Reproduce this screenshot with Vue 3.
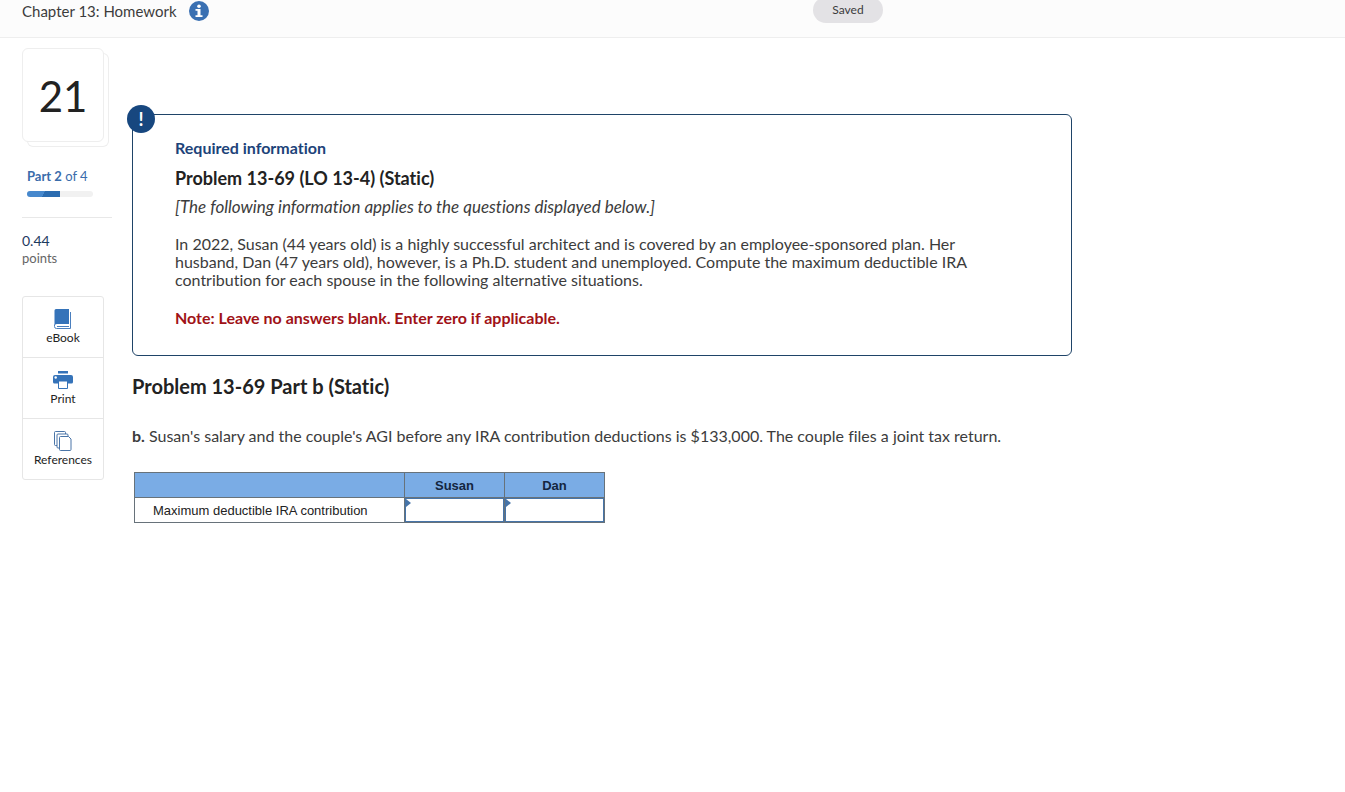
<script setup>
import { ref } from 'vue'

const part = ref(2)
const parts = ref(4)
const tools = [
  { id: 'ebook', label: 'eBook' },
  { id: 'print', label: 'Print' },
  { id: 'references', label: 'References' },
]
const answers = ref([
  { id: 'susan', name: 'Susan', value: '' },
  { id: 'dan', name: 'Dan', value: '' },
])
</script>

<template>
  <div class="homework">
    <header class="top-bar">
      <div class="title">
        <span>Chapter 13: Homework</span>
        <button class="info-btn" type="button" aria-label="Assignment info">
          <svg width="20" height="20" viewBox="0 0 20 20">
            <circle cx="10" cy="10" r="10" fill="#3a70b2" />
            <circle cx="10" cy="5.2" r="1.8" fill="#fff" />
            <path d="M6.500 8h5v6.200h2V16h-7v-1.800h2V9.800h-2z" fill="#fff" />
          </svg>
        </button>
      </div>
      <span class="saved">Saved</span>
    </header>

    <div class="content">
      <aside class="sidebar">
        <div class="question-no">21</div>
        <div class="part">
          <span><b>Part {{ part }}</b> of {{ parts }}</span>
          <div class="progress">
            <div class="progress-fill" :style="{ width: (part / parts) * 100 + '%' }"></div>
          </div>
        </div>
        <div class="points">
          <span class="points-value">0.44</span>
          <span class="points-label">points</span>
        </div>
        <nav class="tools">
          <button v-for="t in tools" :key="t.id" class="tool" type="button">
            <svg v-if="t.id === 'ebook'" width="20" height="22" viewBox="0 0 20 22">
              <path d="M3 1h13v15H4a2.500 2.500 0 0 0-2.500 1.500V2.500A1.500 1.500 0 0 1 3 1z" fill="#3573b9" />
              <path d="M17.500 4v16.500h-14a2 2 0 0 1-2-2v-2M4 18.500h12" fill="none" stroke="#4a7fbe" />
            </svg>
            <svg v-else-if="t.id === 'print'" width="20" height="22" viewBox="0 0 20 22">
              <path d="M5 2h10v2.500H5zM2 6h16a2 2 0 0 1 2 2v5a1.500 1.500 0 0 1-1.500 1.500h-17A1.500 1.500 0 0 1 0 13V8a2 2 0 0 1 2-2z" fill="#3573b9" />
              <path d="M5.500 12h9v7.500h-9z" fill="#fff" stroke="#3573b9" />
              <circle cx="2.700" cy="8.500" r="1.200" fill="#fff" />
            </svg>
            <svg v-else width="20" height="22" viewBox="0 0 20 22">
              <g fill="#fff" stroke="#4a75a8">
                <rect x="1.500" y="1.500" width="11" height="14" rx="1" />
                <rect x="4" y="4" width="11" height="14" rx="1" />
                <path d="M7.500 6.500h8l2.500 2.500v10.500a1 1 0 0 1-1 1H7.500a1 1 0 0 1-1-1v-12a1 1 0 0 1 1-1z" />
              </g>
            </svg>
            <span>{{ t.label }}</span>
          </button>
        </nav>
      </aside>

      <main class="question">
        <section class="required">
          <span class="alert">!</span>
          <h2>Required information</h2>
          <h3>Problem 13-69 (LO 13-4) (Static)</h3>
          <p class="applies">[The following information applies to the questions displayed below.]</p>
          <p>
            In 2022, Susan (44 years old) is a highly successful architect and is covered by an
            employee-sponsored plan. Her husband, Dan (47 years old), however, is a Ph.D. student and
            unemployed. Compute the maximum deductible IRA contribution for each spouse in the
            following alternative situations.
          </p>
          <p class="note">Note: Leave no answers blank. Enter zero if applicable.</p>
        </section>

        <h1>Problem 13-69 Part b (Static)</h1>
        <p class="prompt">
          <b>b.</b> Susan's salary and the couple's AGI before any IRA contribution deductions is
          $133,000. The couple files a joint tax return.
        </p>

        <table class="answer-table">
          <thead>
            <tr>
              <td></td>
              <th v-for="a in answers" :id="a.id" :key="a.id" scope="col">{{ a.name }}</th>
            </tr>
          </thead>
          <tbody>
            <tr>
              <th id="max-ira" class="row-label" scope="row">Maximum deductible IRA contribution</th>
              <td v-for="a in answers" :key="a.id" class="answer-cell">
                <input v-model="a.value" type="text" :aria-labelledby="'max-ira ' + a.id" />
              </td>
            </tr>
          </tbody>
        </table>
      </main>
    </div>
  </div>
</template>

<style>
body { margin: 0; background: #fff; }
</style>

<style scoped>
.homework { font-family: Lato, "Liberation Sans", sans-serif; font-size: 16px; line-height: 18px; font-variant-ligatures: none; color: #3c3c3c; }
h1, h2, h3, p { margin: 0; }
button { font: inherit; color: inherit; background: none; border: none; padding: 0; cursor: pointer; }
svg { display: block; }

.top-bar { display: grid; grid-template-columns: 813px auto; justify-content: start; box-sizing: border-box; height: 41px; margin-top: -3px; background: #fcfcfc; border-bottom: 1px solid #eee; }
.title { display: flex; align-items: center; gap: 12px; height: 28px; padding-left: 22px; font-size: 15px; }
.saved { width: 70px; height: 26px; line-height: 26px; border-radius: 13px; background: #e3e2e5; font-size: 12px; text-align: center; }

.content { display: flex; gap: 20px; padding: 10px 22px; }
.sidebar { flex: 0 0 90px; }
.question-no { box-sizing: border-box; width: 82px; height: 94px; line-height: 94px; border: 1px solid #eee; border-radius: 6px; background: #fff; box-shadow: 5px 5px 0 -1px #fff, 5px 5px 0 0 #eee; font-size: 42px; color: #222; text-align: center; }
.part { padding: 25px 0 20px 5px; border-bottom: 1px solid #e8e8e8; font-size: 13px; color: #3a6cab; }
.progress { width: 66px; height: 6px; margin-top: 6px; border-radius: 3px; background: #f1f1f1; overflow: hidden; }
.progress-fill { height: 100%; background: linear-gradient(120deg, #4688cd 50%, #2b6cb0 50%); }
.points { display: flex; flex-direction: column; padding: 14px 0 30px; }
.points-value { font-size: 14px; color: #1d3a5f; }
.points-label { font-size: 13px; line-height: 16px; color: #666; }
.tools { box-sizing: border-box; width: 82px; border: 1px solid #e6e6e6; border-radius: 3px; }
.tool { display: flex; flex-direction: column; align-items: center; width: 100%; height: 60px; padding-top: 11px; box-sizing: border-box; font-size: 12px; line-height: 16px; color: #222; }
.tool + .tool { height: 61px; border-top: 1px solid #e6e6e6; }

.question { flex: 1; min-width: 0; padding-top: 66px; }
.required { position: relative; box-sizing: border-box; max-width: 940px; padding: 24px 60px 28px 42px; border: 1px solid #1f4468; border-radius: 6px; }
.alert { position: absolute; top: -10px; left: -6px; width: 28px; height: 28px; line-height: 28px; border-radius: 50%; background: #17477f; color: #fff; font-size: 18px; font-weight: 700; text-align: center; }
.required h2 { font-size: 16px; color: #1d4379; }
.required h3 { margin-top: 12px; font-size: 18px; color: #222; }
.applies { margin-top: 11px; font-size: 17px; font-style: italic; }
.applies + p { margin-top: 19px; }
.note { margin-top: 20px; font-weight: 700; color: #a01217; }
.question h1 { margin-top: 19px; font-size: 20px; line-height: 22px; color: #222; }
.prompt { margin-top: 30px; }

.answer-table { margin: 27px 0 0 2px; border-collapse: collapse; table-layout: fixed; width: 471px; font-family: "Liberation Sans", Arial, sans-serif; font-size: 13px; color: #222; }
.answer-table th, .answer-table td { box-sizing: border-box; height: 25px; padding: 0; border: 1px solid #67727a; }
.answer-table th { padding-top: 1px; }
.answer-table thead td { width: 270px; }
.answer-table thead td, .answer-table thead th { background: #7aace5; color: #14263f; }
.answer-table .row-label { padding-left: 18px; font-weight: 400; text-align: left; }
.answer-table .answer-cell { position: relative; }
.answer-cell::before { content: ""; position: absolute; top: 1px; left: 1px; border: solid transparent; border-width: 4px 0 4px 5px; border-left-color: #4674a8; }
.answer-cell input { display: block; box-sizing: border-box; width: 100%; height: 24px; padding: 0 6px; border: 1px solid #4674a8; background: #fff; font: inherit; text-align: right; outline: none; }
</style>
